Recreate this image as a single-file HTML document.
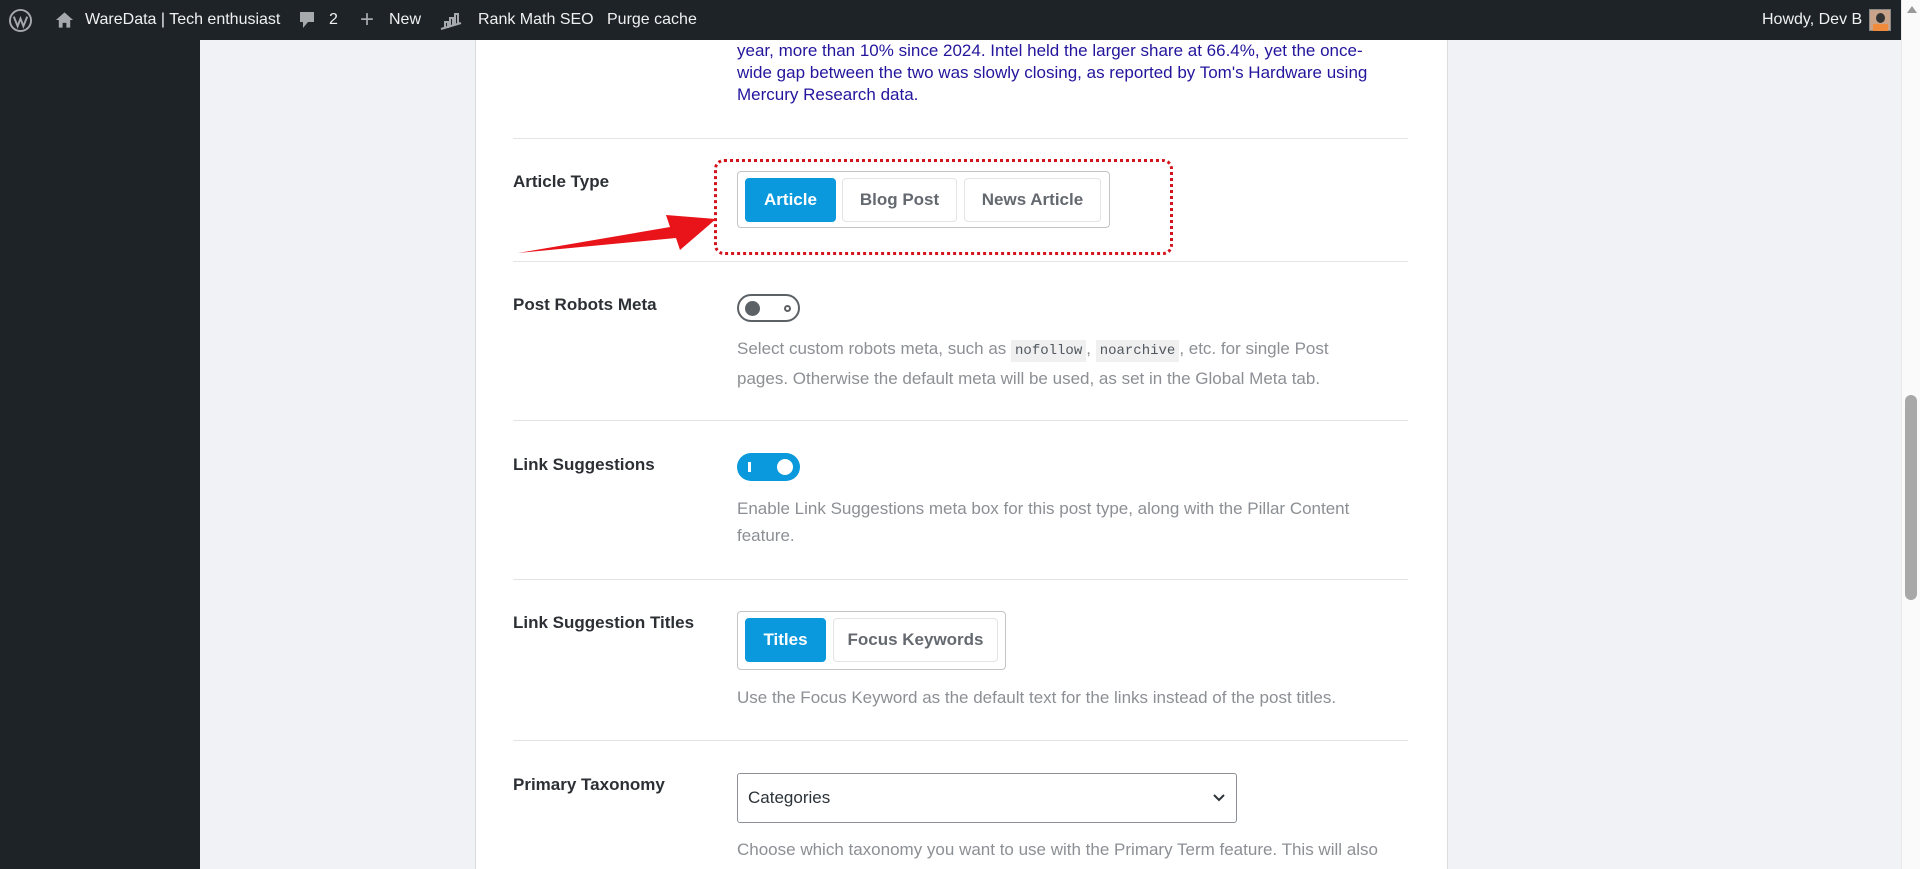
<!DOCTYPE html>
<html style="width:1920px;height:869px;overflow:hidden"><head><meta charset="utf-8"><style>
*{box-sizing:border-box;margin:0;padding:0}
body{width:1920px;height:869px;overflow:hidden;background:#f0f2f5;font-family:"Liberation Sans",sans-serif;position:relative}
#wrap{position:absolute;left:0;top:0;width:1920px;height:869px;overflow:hidden}
.bar{position:absolute;left:0;top:0;width:1901px;height:40px;background:#1d2327;color:#f0f0f1;font-size:16px}
.bar span{position:absolute;top:11px;white-space:nowrap}
.side{position:absolute;left:0;top:40px;width:200px;height:829px;background:#1d2327}
.panel{position:absolute;left:475px;top:40px;width:973px;height:829px;background:#fff;border-left:1px solid #dcdcde;border-right:1px solid #dcdcde}
.a{position:absolute}
.hr{position:absolute;left:513px;width:895px;height:1px;background:#e2e4e7}
.lab{position:absolute;left:513px;font-size:17px;font-weight:bold;color:#2c3035}
.desc{position:absolute;left:737px;font-size:17px;color:#8c8f94;line-height:27px;width:700px}
.grp{position:absolute;border:1px solid #c3c4c7;border-radius:4px;background:#fff}
.btn{position:absolute;border:1px solid #e2e4e7;border-radius:4px;font-size:17px;font-weight:bold;color:#646970;text-align:center;background:#fff}
.btn.on{background:#0a99dc;border-color:#0a99dc;color:#fff}
code{font-family:"Liberation Mono",monospace;font-size:14px;background:#f0f0f1;padding:3px 4px;color:#50575e}
.scr{position:absolute;left:1901px;top:0;width:19px;height:869px;background:#fafafa;border-left:1px solid #e8e8e8}
</style></head><body><div id="wrap">
<div class="bar">
<svg class="a" style="left:9px;top:9px" width="23" height="23" viewBox="0 0 24 24"><circle cx="12" cy="12" r="11" fill="none" stroke="#a7aaad" stroke-width="2"/><path d="M5 8l4 10 3-8 3 8 4-10" fill="none" stroke="#a7aaad" stroke-width="2"/></svg>
<svg class="a" style="left:55px;top:11px" width="19" height="18" viewBox="0 0 20 18"><path d="M10 1L1 9h3v8h4v-5h4v5h4V9h3z" fill="#a7aaad"/></svg>
<span style="left:85px">WareData | Tech enthusiast</span>
<svg class="a" style="left:298px;top:11px" width="18" height="19" viewBox="0 0 18 19"><path d="M2 1h14v10h-6l-5 6v-6H2z" fill="#a7aaad"/></svg>
<span style="left:329px">2</span>
<span style="left:360px;top:6px;font-size:24px;color:#a7aaad">+</span>
<span style="left:389px">New</span>
<svg class="a" style="left:440px;top:12px" width="22" height="18" viewBox="0 0 22 18"><path d="M1 17l20-6M5 16V10h3v6M10 14V6h3v8M15 12V2h3v9" stroke="#a7aaad" stroke-width="2" fill="none"/></svg>
<span style="left:478px">Rank Math SEO</span>
<span style="left:607px">Purge cache</span>
<span style="left:1762px">Howdy, Dev B</span>
<div class="a" style="left:1869px;top:9px;width:22px;height:22px;background:#c9a48a;border:1px solid #888"><div style="position:absolute;left:6px;top:3px;width:9px;height:10px;border-radius:50%;background:#333"></div><div style="position:absolute;left:3px;top:14px;width:15px;height:7px;background:#f08a3c"></div></div>
</div>
<div class="side"></div>
<div class="panel"></div>
<div class="scr"><div class="a" style="left:3px;top:395px;width:12px;height:205px;background:#a8a8a8;border-radius:6px"></div><div class="a" style="left:5px;top:6px;width:0;height:0;border-left:5px solid transparent;border-right:5px solid transparent;border-bottom:7px solid #999"></div></div>

<div class="a" style="left:737px;top:40px;font-size:17px;line-height:22px;color:#23169c;width:660px">year, more than 10% since 2024. Intel held the larger share at 66.4%, yet the once-<br>wide gap between the two was slowly closing, as reported by Tom's Hardware using<br>Mercury Research data.</div>

<div class="hr" style="top:138px"></div>
<div class="lab" style="top:172px">Article Type</div>
<div class="grp" style="left:737px;top:171px;width:373px;height:57px"></div>
<div class="btn on" style="left:745px;top:178px;width:91px;height:44px;line-height:42px">Article</div>
<div class="btn" style="left:842px;top:178px;width:115px;height:44px;line-height:42px">Blog Post</div>
<div class="btn" style="left:964px;top:178px;width:137px;height:44px;line-height:42px">News Article</div>
<div class="a" style="left:714px;top:159px;width:459px;height:96px;border:3px dotted #d3141c;border-radius:10px"></div>
<svg class="a" style="left:510px;top:205px" width="210" height="55" viewBox="0 0 210 55"><path d="M8 48 L160 22 L156 10 L206 14 L170 45 L166 33 Z" fill="#e8141a"/></svg>

<div class="hr" style="top:261px"></div>
<div class="lab" style="top:295px">Post Robots Meta</div>
<div class="a" style="left:737px;top:294px;width:63px;height:28px;border:2px solid #5c6166;border-radius:14px"><div class="a" style="left:6px;top:5px;width:15px;height:15px;border-radius:50%;background:#5c6166"></div><div class="a" style="left:45px;top:9px;width:7px;height:7px;border-radius:50%;border:2px solid #5c6166"></div></div>
<div class="desc" style="top:335px">Select custom robots meta, such as <code>nofollow</code>, <code>noarchive</code>, etc. for single Post<br>pages. Otherwise the default meta will be used, as set in the Global Meta tab.</div>

<div class="hr" style="top:420px"></div>
<div class="lab" style="top:455px">Link Suggestions</div>
<div class="a" style="left:737px;top:453px;width:63px;height:28px;background:#0a99dc;border-radius:14px"><div class="a" style="left:11px;top:9px;width:3px;height:10px;background:#fff"></div><div class="a" style="left:40px;top:6px;width:16px;height:16px;border-radius:50%;background:#fff"></div></div>
<div class="desc" style="top:495px">Enable Link Suggestions meta box for this post type, along with the Pillar Content<br>feature.</div>

<div class="hr" style="top:579px"></div>
<div class="lab" style="top:613px">Link Suggestion Titles</div>
<div class="grp" style="left:737px;top:611px;width:269px;height:59px"></div>
<div class="btn on" style="left:745px;top:618px;width:81px;height:44px;line-height:42px">Titles</div>
<div class="btn" style="left:833px;top:618px;width:165px;height:44px;line-height:42px">Focus Keywords</div>
<div class="desc" style="top:684px">Use the Focus Keyword as the default text for the links instead of the post titles.</div>

<div class="hr" style="top:740px"></div>
<div class="lab" style="top:775px">Primary Taxonomy</div>
<div class="a" style="left:737px;top:773px;width:500px;height:50px;border:1px solid #8c8f94;border-radius:3px;font-size:17px;color:#2c3338;padding:14px 10px">Categories
<svg class="a" style="right:10px;top:19px" width="14" height="10" viewBox="0 0 14 10"><path d="M2 2l5 5 5-5" stroke="#2c3338" stroke-width="2" fill="none"/></svg></div>
<div class="desc" style="top:836px;height:33px;overflow:hidden">Choose which taxonomy you want to use with the Primary Term feature. This will also<br>be the term used on the Breadcrumbs when the permalink Post is being viewed.</div>
</div></body></html>
